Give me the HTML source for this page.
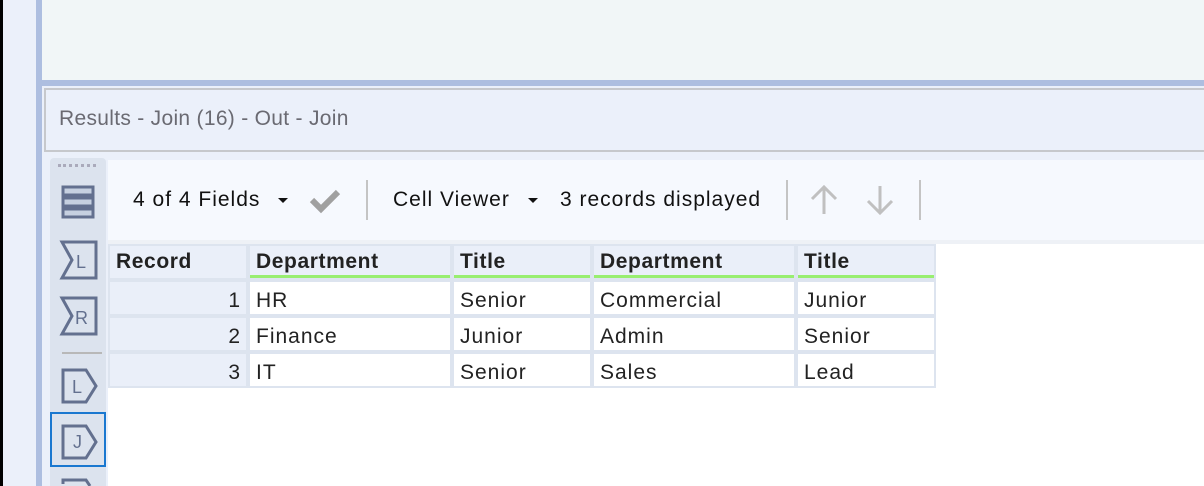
<!DOCTYPE html>
<html><head><style>
*{margin:0;padding:0;box-sizing:border-box}
body{width:1204px;height:486px;overflow:hidden;background:#fff;position:relative;font-family:"Segoe UI","Liberation Sans",sans-serif;}
.a{position:absolute}
.t{font-size:21px;letter-spacing:1px;color:#111;white-space:nowrap}
.c{position:absolute;background:#fff;font-size:21px;letter-spacing:1px;color:#222;padding-left:6px;padding-top:3px;line-height:32px;white-space:nowrap}
.h{position:absolute;background:#eaeff9;font-size:21px;letter-spacing:0.6px;font-weight:bold;color:#222;padding-left:6px;padding-top:4px;white-space:nowrap}
.g{position:absolute;left:0;right:0;bottom:0;height:3px;background:#98ee70}
.r{position:absolute;background:#eaeff9;font-size:21px;color:#222;text-align:right;padding-right:6px;padding-top:3px;line-height:32px}
</style></head><body>
<div class="a" style="left:0;top:0;width:3px;height:486px;background:#000"></div>
<div class="a" style="left:3px;top:0;width:33px;height:486px;background:#ebf0fa"></div>
<div class="a" style="left:36px;top:0;width:6px;height:486px;background:#adbee0"></div>
<div class="a" style="left:42px;top:0;width:1162px;height:80px;background:#f1f6f7"></div>
<div class="a" style="left:42px;top:80px;width:1162px;height:6px;background:#adbee0"></div>
<div class="a" style="left:42px;top:86px;width:1162px;height:400px;background:#ebf0fa"></div>
<div class="a" style="left:44px;top:88px;width:1170px;height:64px;border:2px solid #c6c8cc;background:#ebf0fa"></div>
<div class="a t" style="left:59px;top:107px;color:#6a6a72;letter-spacing:0.3px">Results - Join (16) - Out - Join</div>
<div class="a" style="left:50px;top:158px;width:56px;height:328px;background:#dce3ee;border-radius:4px 4px 0 0"></div>
<div class="a" style="left:58px;top:164px;width:38px;height:4px;border-top:3px dotted #aab"></div>
<svg class="a" style="left:50px;top:180px" width="56" height="306" viewBox="0 0 56 306" fill="none" stroke="#63708f" stroke-width="3">
<rect x="13" y="7" width="30" height="8" fill="#c6d0e0"/><rect x="13" y="18" width="30" height="8" fill="#c6d0e0"/><rect x="13" y="29" width="30" height="8" fill="#c6d0e0"/>
<path d="M12 62 H46 V98 H12 L22 80 Z"/><text x="26" y="88" font-size="18" fill="#63708f" stroke="none" font-family="Liberation Sans">L</text>
<path d="M12 118 H46 V154 H12 L22 136 Z"/><text x="25" y="144" font-size="18" fill="#63708f" stroke="none" font-family="Liberation Sans">R</text>
<path d="M12 173 H52" stroke="#b8b8b8" stroke-width="2"/>
<path d="M13 190 H36 L46 206 L36 222 H13 Z"/><text x="22" y="213" font-size="18" fill="#63708f" stroke="none" font-family="Liberation Sans">L</text>
<rect x="1" y="233" width="54" height="53" stroke="#1a78d0" stroke-width="2"/>
<path d="M13 246 H36 L46 262 L36 278 H13 Z"/><text x="23" y="268" font-size="18" fill="#63708f" stroke="none" font-family="Liberation Sans">J</text>
<path d="M13 304 V300 H36 L40 306"/>
</svg>
<div class="a" style="left:108px;top:160px;width:1096px;height:326px;background:#fff"></div>
<div class="a" style="left:108px;top:160px;width:1096px;height:80px;background:#f6f9fe"></div>
<div class="a" style="left:108px;top:240px;width:1096px;height:4px;background:#eef1f6"></div>
<div class="a t" style="left:133px;top:188px">4 of 4 Fields</div>
<div class="a" style="left:278px;top:198px;border:5px solid transparent;border-top:5px solid #111"></div>
<svg class="a" style="left:308px;top:186px" width="36" height="30"><path d="M4 14 L13 23 L30 6" stroke="#a0a0a0" stroke-width="6" fill="none"/></svg>
<div class="a" style="left:366px;top:180px;width:2px;height:40px;background:#c4c4c4"></div>
<div class="a t" style="left:393px;top:188px">Cell Viewer</div>
<div class="a" style="left:528px;top:198px;border:5px solid transparent;border-top:5px solid #111"></div>
<div class="a t" style="left:560px;top:188px">3 records displayed</div>
<div class="a" style="left:786px;top:180px;width:2px;height:40px;background:#c4c4c4"></div>
<svg class="a" style="left:806px;top:182px" width="100" height="36" fill="none" stroke="#c0c0c0" stroke-width="3"><path d="M18 32 V5 M6 17 L18 5 L30 17"/><path d="M74 4 V31 M62 19 L74 31 L86 19"/></svg>
<div class="a" style="left:919px;top:180px;width:2px;height:40px;background:#c4c4c4"></div>
<div class="a" style="left:108px;top:244px;width:828px;height:144px;background:#dde4ef"></div>
<div class="h" style="left:110px;top:246px;width:136px;height:32px">Record</div>
<div class="h" style="left:250px;top:246px;width:200px;height:32px">Department<div class="g"></div></div>
<div class="h" style="left:454px;top:246px;width:136px;height:32px">Title<div class="g"></div></div>
<div class="h" style="left:594px;top:246px;width:200px;height:32px">Department<div class="g"></div></div>
<div class="h" style="left:798px;top:246px;width:136px;height:32px">Title<div class="g"></div></div>

<div class="r" style="left:110px;top:282px;width:136px;height:32px">1</div>
<div class="c" style="left:250px;top:282px;width:200px;height:32px">HR</div>
<div class="c" style="left:454px;top:282px;width:136px;height:32px">Senior</div>
<div class="c" style="left:594px;top:282px;width:200px;height:32px">Commercial</div>
<div class="c" style="left:798px;top:282px;width:136px;height:32px">Junior</div>

<div class="r" style="left:110px;top:318px;width:136px;height:32px">2</div>
<div class="c" style="left:250px;top:318px;width:200px;height:32px">Finance</div>
<div class="c" style="left:454px;top:318px;width:136px;height:32px">Junior</div>
<div class="c" style="left:594px;top:318px;width:200px;height:32px">Admin</div>
<div class="c" style="left:798px;top:318px;width:136px;height:32px">Senior</div>

<div class="r" style="left:110px;top:354px;width:136px;height:32px">3</div>
<div class="c" style="left:250px;top:354px;width:200px;height:32px">IT</div>
<div class="c" style="left:454px;top:354px;width:136px;height:32px">Senior</div>
<div class="c" style="left:594px;top:354px;width:200px;height:32px">Sales</div>
<div class="c" style="left:798px;top:354px;width:136px;height:32px">Lead</div>
</body></html>
